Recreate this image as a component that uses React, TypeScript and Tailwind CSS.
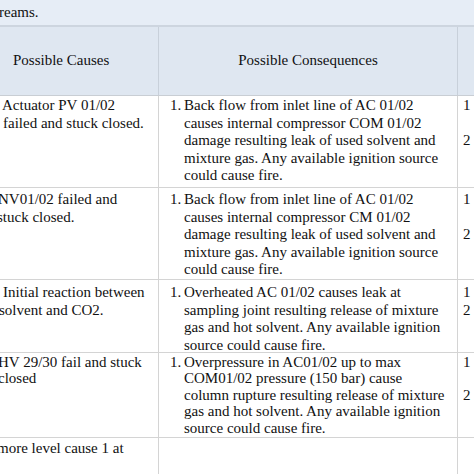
import React from 'react';

type Row = {
  h: string;
  pt: string;
  lh: string;
  causes: { text: string; ml: string }[];
  cons: string[];
  nums: string[];
};

const rows: Row[] = [
  {
    h: 'h-[92px]',
    pt: 'pt-[1px]',
    lh: 'leading-[17.5px]',
    causes: [
      { text: 'Actuator PV 01/02', ml: 'ml-[2px]' },
      { text: 'failed and stuck closed.', ml: 'ml-[3px]' },
    ],
    cons: [
      'Back flow from inlet line of AC 01/02',
      'causes internal compressor COM 01/02',
      'damage resulting leak of used solvent and',
      'mixture gas. Any available ignition source',
      'could cause fire.',
    ],
    nums: ['1', '', '2'],
  },
  {
    h: 'h-[92px]',
    pt: 'pt-[3px]',
    lh: 'leading-[17.5px]',
    causes: [
      { text: 'NV01/02 failed and', ml: 'ml-[-2px]' },
      { text: 'stuck closed.', ml: 'ml-[-3px]' },
    ],
    cons: [
      'Back flow from inlet line of AC 01/02',
      'causes internal compressor CM 01/02',
      'damage resulting leak of used solvent and',
      'mixture gas. Any available ignition source',
      'could cause fire.',
    ],
    nums: ['1', '', '2'],
  },
  {
    h: 'h-[73px]',
    pt: 'pt-[4px]',
    lh: 'leading-[17.5px]',
    causes: [
      { text: 'Initial reaction between', ml: 'ml-[3px]' },
      { text: 'solvent and CO2.', ml: 'ml-[-1px]' },
    ],
    cons: [
      'Overheated AC 01/02 causes leak at',
      'sampling joint resulting release of mixture',
      'gas and hot solvent. Any available ignition',
      'source could cause fire.',
    ],
    nums: ['1', '2'],
  },
  {
    h: 'h-[85px]',
    pt: 'pt-[1px]',
    lh: 'leading-[16.4px]',
    causes: [
      { text: 'HV 29/30 fail and stuck', ml: 'ml-[-2px]' },
      { text: 'closed', ml: 'ml-[-2px]' },
    ],
    cons: [
      'Overpressure in AC01/02 up to max',
      'COM01/02 pressure (150 bar) cause',
      'column rupture resulting release of mixture',
      'gas and hot solvent. Any available ignition',
      'source could cause fire.',
    ],
    nums: ['1', '', '2'],
  },
  {
    h: 'h-[60px]',
    pt: 'pt-[2px]',
    lh: 'leading-[17.5px]',
    causes: [{ text: 'more level cause 1 at', ml: 'ml-[-3px]' }],
    cons: [],
    nums: [],
  },
];

export default function App() {
  return (
    <div className="w-[474px] h-[474px] overflow-hidden bg-white text-[#111111] text-[15px] leading-[17.5px] font-['Liberation_Serif','Times_New_Roman',serif]">
      {/* caption strip */}
      <div className="h-[27px] bg-[#e6edf6] border-b-2 border-[#cdd5df] flex items-center">
        <span className="ml-[-1px] whitespace-nowrap">reams.</span>
      </div>

      {/* header */}
      <div className="h-[69px] bg-[#dfe7f1] border-b border-[#c9ced4] grid grid-cols-[159px_299px_16px]">
        <div className="border-r border-[#c8d0da] flex items-center pl-[13px] whitespace-nowrap">
          Possible Causes
        </div>
        <div className="border-r border-[#c8d0da] flex items-center justify-center whitespace-nowrap">
          Possible Consequences
        </div>
        <div />
      </div>

      {rows.map((r, i) => (
        <div
          key={i}
          className={`${r.h} ${r.lh} border-b border-[#d4d4d4] grid grid-cols-[159px_299px_16px]`}
        >
          <div className={`border-r border-[#d4d4d4] ${r.pt} whitespace-nowrap overflow-hidden`}>
            {r.causes.map((c, j) => (
              <div key={j} className={c.ml}>
                {c.text}
              </div>
            ))}
          </div>
          <div className={`border-r border-[#d4d4d4] ${r.pt} pl-[11px] whitespace-nowrap`}>
            {r.cons.map((line, j) =>
              j === 0 ? (
                <div key={j} className="flex">
                  <span className="w-[14px]">1.</span>
                  <span>{line}</span>
                </div>
              ) : (
                <div key={j} className="pl-[14px]">
                  {line}
                </div>
              )
            )}
          </div>
          <div className={`${r.pt} pl-[5px] overflow-hidden`}>
            {r.nums.map((n, j) => (
              <div key={j}>{n || '\u00a0'}</div>
            ))}
          </div>
        </div>
      ))}
    </div>
  );
}
